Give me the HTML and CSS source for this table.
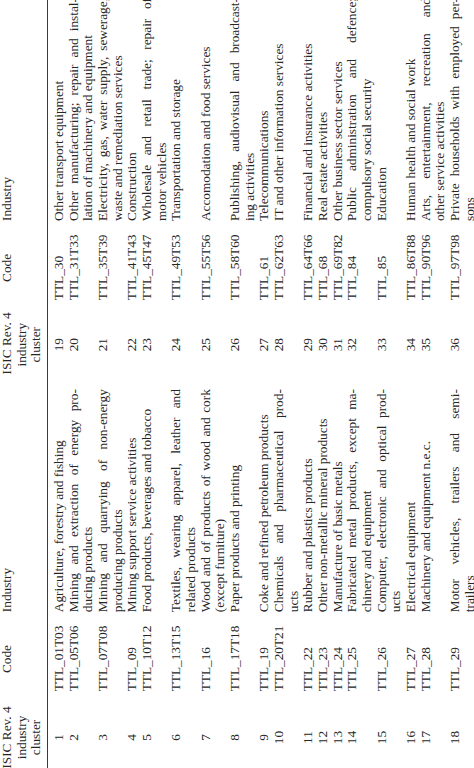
FILE: index.html
```html
<!DOCTYPE html>
<html>
<head>
<meta charset="utf-8">
<title>ISIC industry clusters</title>
<link rel="stylesheet" href="styles.css">
</head>
<body>
<div class="page">
  <div class="sheet">
    <div class="tbl">
      <div class="num hd">ISIC Rev. 4<br>industry<br>cluster</div>
      <div class="code hd">Code</div>
      <div class="ind hd">Industry</div>
      <div class="num hd">ISIC Rev. 4<br>industry<br>cluster</div>
      <div class="code hd">Code</div>
      <div class="ind hd">Industry</div>

      <div class="rule"></div>

      <div class="num">1</div><div class="code">TTL_01T03</div><div class="ind"><span class="l">Agriculture, forestry and fishing</span></div>
      <div class="num">19</div><div class="code">TTL_30</div><div class="ind"><span class="l">Other transport equipment</span></div>

      <div class="num">2</div><div class="code">TTL_05T06</div><div class="ind"><span class="l j">Mining and extraction of energy pro-</span><span class="l">ducing products</span></div>
      <div class="num">20</div><div class="code">TTL_31T33</div><div class="ind"><span class="l j">Other manufacturing; repair and instal-</span><span class="l">lation of machinery and equipment</span></div>

      <div class="num">3</div><div class="code">TTL_07T08</div><div class="ind"><span class="l j">Mining and quarrying of non-energy</span><span class="l">producing products</span></div>
      <div class="num">21</div><div class="code">TTL_35T39</div><div class="ind"><span class="l j">Electricity, gas, water supply, sewerage,</span><span class="l">waste and remediation services</span></div>

      <div class="num">4</div><div class="code">TTL_09</div><div class="ind"><span class="l">Mining support service activities</span></div>
      <div class="num">22</div><div class="code">TTL_41T43</div><div class="ind"><span class="l">Construction</span></div>

      <div class="num">5</div><div class="code">TTL_10T12</div><div class="ind"><span class="l">Food products, beverages and tobacco</span></div>
      <div class="num">23</div><div class="code">TTL_45T47</div><div class="ind"><span class="l j">Wholesale and retail trade; repair of</span><span class="l">motor vehicles</span></div>

      <div class="num">6</div><div class="code">TTL_13T15</div><div class="ind"><span class="l j">Textiles, wearing apparel, leather and</span><span class="l">related products</span></div>
      <div class="num">24</div><div class="code">TTL_49T53</div><div class="ind"><span class="l">Transportation and storage</span></div>

      <div class="num">7</div><div class="code">TTL_16</div><div class="ind"><span class="l j">Wood and of products of wood and cork</span><span class="l">(except furniture)</span></div>
      <div class="num">25</div><div class="code">TTL_55T56</div><div class="ind"><span class="l">Accomodation and food services</span></div>

      <div class="num">8</div><div class="code">TTL_17T18</div><div class="ind"><span class="l">Paper products and printing</span></div>
      <div class="num">26</div><div class="code">TTL_58T60</div><div class="ind"><span class="l j">Publishing, audiovisual and broadcast-</span><span class="l">ing activities</span></div>

      <div class="num">9</div><div class="code">TTL_19</div><div class="ind"><span class="l">Coke and refined petroleum products</span></div>
      <div class="num">27</div><div class="code">TTL_61</div><div class="ind"><span class="l">Telecommunications</span></div>

      <div class="num">10</div><div class="code">TTL_20T21</div><div class="ind"><span class="l j">Chemicals and pharmaceutical prod-</span><span class="l">ucts</span></div>
      <div class="num">28</div><div class="code">TTL_62T63</div><div class="ind"><span class="l">IT and other information services</span></div>

      <div class="num">11</div><div class="code">TTL_22</div><div class="ind"><span class="l">Rubber and plastics products</span></div>
      <div class="num">29</div><div class="code">TTL_64T66</div><div class="ind"><span class="l">Financial and insurance activities</span></div>

      <div class="num">12</div><div class="code">TTL_23</div><div class="ind"><span class="l">Other non-metallic mineral products</span></div>
      <div class="num">30</div><div class="code">TTL_68</div><div class="ind"><span class="l">Real estate activities</span></div>

      <div class="num">13</div><div class="code">TTL_24</div><div class="ind"><span class="l">Manufacture of basic metals</span></div>
      <div class="num">31</div><div class="code">TTL_69T82</div><div class="ind"><span class="l">Other business sector services</span></div>

      <div class="num">14</div><div class="code">TTL_25</div><div class="ind"><span class="l j">Fabricated metal products, except ma-</span><span class="l">chinery and equipment</span></div>
      <div class="num">32</div><div class="code">TTL_84</div><div class="ind"><span class="l j">Public administration and defence;</span><span class="l">compulsory social security</span></div>

      <div class="num">15</div><div class="code">TTL_26</div><div class="ind"><span class="l j">Computer, electronic and optical prod-</span><span class="l">ucts</span></div>
      <div class="num">33</div><div class="code">TTL_85</div><div class="ind"><span class="l">Education</span></div>

      <div class="num">16</div><div class="code">TTL_27</div><div class="ind"><span class="l">Electrical equipment</span></div>
      <div class="num">34</div><div class="code">TTL_86T88</div><div class="ind"><span class="l">Human health and social work</span></div>

      <div class="num">17</div><div class="code">TTL_28</div><div class="ind"><span class="l">Machinery and equipment n.e.c.</span></div>
      <div class="num">35</div><div class="code">TTL_90T96</div><div class="ind"><span class="l j">Arts, entertainment, recreation and</span><span class="l">other service activities</span></div>

      <div class="num">18</div><div class="code">TTL_29</div><div class="ind"><span class="l j">Motor vehicles, trailers and semi-</span><span class="l">trailers</span></div>
      <div class="num">36</div><div class="code">TTL_97T98</div><div class="ind"><span class="l j">Private households with employed per-</span><span class="l">sons</span></div>
    </div>
  </div>
</div>
</body>
</html>
```
FILE: styles.css
```css
html, body {
  margin: 0;
  padding: 0;
  background: #ffffff;
  overflow: hidden;
}

.page {
  width: 474px;
  height: 768px;
  overflow: hidden;
  background: #ffffff;
}

/* The table is laid out upright, then turned a quarter turn so it reads bottom-to-top */
.sheet {
  --s: 1.09;
  width: calc(800px / var(--s));
  transform-origin: 0 0;
  transform: translateY(768px) rotate(-90deg) scaleX(var(--s));
  font-family: "Liberation Serif", "Times New Roman", serif;
  font-size: 12.2px;
  line-height: 14.67px;
  color: #262626;
}

.tbl {
  display: grid;
  grid-template-columns:
    calc(77.67px / var(--s))
    calc(79.17px / var(--s))
    calc(237.67px / var(--s))
    calc(74.33px / var(--s))
    calc(79.17px / var(--s))
    calc(237.67px / var(--s));
  margin-left: calc(-10.33px / var(--s));
  margin-top: -2.3px;
  align-items: start;
}

.num {
  text-align: center;
  padding: 0 calc(7.33px / var(--s));
  white-space: nowrap;
}

.code {
  padding-left: calc(7.33px / var(--s));
  white-space: nowrap;
}

.code.hd {
  text-align: center;
  padding-right: calc(7.33px / var(--s));
}

.ind {
  box-sizing: border-box;
  width: calc(237.67px / var(--s));
  padding: 0 calc(7.33px / var(--s));
}

.l {
  display: block;
}

.l.j {
  text-align: justify;
  text-align-last: justify;
}

.rule {
  grid-column: 1 / -1;
  height: 1px;
  background: #3a3a3a;
  margin: 3.3px 0 3.7px;
}
```
